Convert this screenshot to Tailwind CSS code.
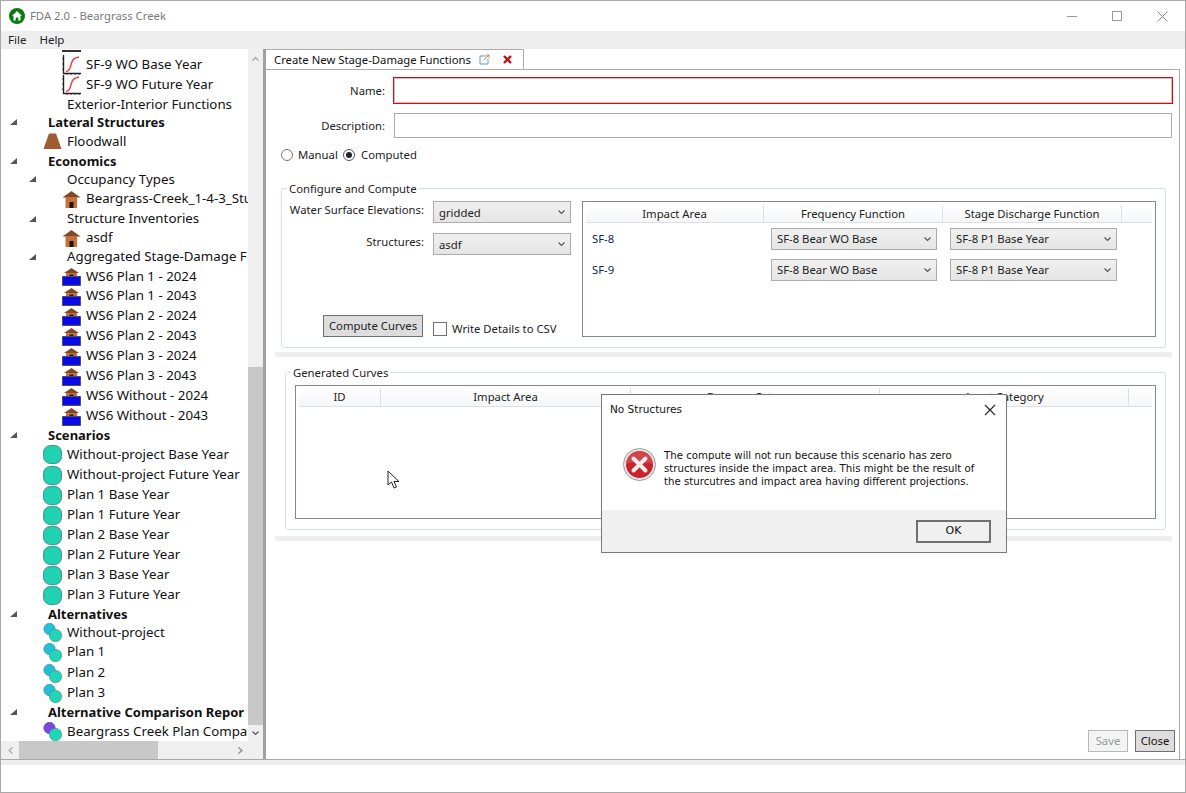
<!DOCTYPE html>
<html lang="en">
<head>
<meta charset="UTF-8">
<title>FDA 2.0 - Beargrass Creek</title>
<script src="https://cdn.jsdelivr.net/npm/@tailwindcss/browser@4"></script>
</head>
<body class="bg-white text-[#111] font-['Noto_Sans',sans-serif] overflow-hidden">
<svg class="hidden">
  <symbol id="curve" viewBox="0 0 19 20">
    <path d="M1.500 0V18.500H19" fill="none" stroke="#222" stroke-width="1.400"/>
    <path d="M0 4h1M0 9h1M0 14h1M5 19v1M9 19v1M13 19v1M17 19v1" stroke="#444"/>
    <path d="M4 16.500C8 15.500 8 13 9.500 8C11 3.500 13 3 17 2" fill="none" stroke="#ee3340" stroke-width="1.400"/>
  </symbol>
  <symbol id="house" viewBox="0 0 19 19">
    <path d="M9.500 1L18.500 7.500H0.500Z" fill="#7b4a2c"/>
    <path d="M3.500 7H15V18H3.500Z" fill="#c9703a"/>
    <path d="M7.500 12H11.500V18H7.500Z" fill="#1c1410"/>
  </symbol>
  <symbol id="flood" viewBox="0 0 19 19">
    <path d="M9.500 1L17 6H2Z" fill="#7b4a2c"/>
    <path d="M4 6H15V10H4Z" fill="#c9703a"/>
    <path d="M7.500 7.500H11.500V10H7.500Z" fill="#2a1a10"/>
    <path d="M0.500 9.500H18.500V18.500H0.500Z" fill="#0a0ae8" stroke="#44506a"/>
  </symbol>
  <symbol id="scen" viewBox="0 0 19 19">
    <rect x="0.500" y="0.500" width="18" height="18" rx="7" fill="#1fd2b2" stroke="#4a8c88"/>
  </symbol>
  <symbol id="alt" viewBox="0 0 19 19">
    <circle cx="6.500" cy="6" r="5.700" fill="#20c0d8" stroke="#4d8a9c" stroke-width="0.700"/>
    <rect x="6.500" y="6.500" width="12" height="12" rx="5.500" fill="#20d6b6" stroke="#4b948c" stroke-width="0.700"/>
  </symbol>
  <symbol id="comp" viewBox="0 0 19 19">
    <circle cx="6.500" cy="6" r="5.700" fill="#7f45e0" stroke="#55508c" stroke-width="0.700"/>
    <rect x="6.500" y="6.500" width="12" height="12" rx="5.500" fill="#20d6b6" stroke="#4b948c" stroke-width="0.700"/>
  </symbol>
  <symbol id="arrow" viewBox="0 0 7 7"><path d="M7 0V6H0Z" fill="#555"/></symbol>
  <symbol id="chev" viewBox="0 0 7 5"><path d="M0.500 0.500L3.500 3.500L6.500 0.500" fill="none" stroke="#555" stroke-width="1.200"/></symbol>
</svg>

<div class="relative w-[1186px] h-[793px] border border-[#a8a8a8] flex flex-col overflow-hidden">
  <!-- title bar -->
  <div class="h-[30px] flex items-center shrink-0">
    <svg class="w-4 h-4 ml-[8px]" viewBox="0 0 16 16"><circle cx="8" cy="8" r="8" fill="#0a7a14"/><path d="M8 3L13 8H11.500V12.500H9.300V9.500H6.700V12.500H4.500V8H3Z" fill="#fff"/></svg>
    <span class="ml-[5px] mt-px text-[11.3px] text-[#7a7a7a]">FDA 2.0 - Beargrass Creek</span>
    <div class="ml-auto flex items-center mr-[17px] gap-[35px]">
      <div class="w-[10px] h-px bg-[#999]"></div>
      <div class="w-[10px] h-[10px] border border-[#999]"></div>
      <svg class="w-[11px] h-[11px]" viewBox="0 0 11 11"><path d="M0.500 0.500L10.500 10.500M10.500 0.500L0.500 10.500" stroke="#888" stroke-width="1"/></svg>
    </div>
  </div>
  <!-- menu -->
  <div class="h-[18px] bg-[#eeeeee] flex items-center pl-[7px] gap-[13px] text-[11.5px] text-[#222] shrink-0">
    <span>File</span><span>Help</span>
  </div>

  <div class="flex h-[710px] shrink-0">
    <!-- tree -->
    <div class="w-[262px] flex flex-col shrink-0">
      <div class="flex h-[692px]">
        <div class="w-[247px] h-[692px] overflow-hidden text-[13.3px] leading-none whitespace-nowrap">
          <div class="h-[6px] pt-px pl-[61px]"><div class="w-[19px] h-[2px] bg-[#333]"></div></div>
          <div class="flex items-center h-5 pl-[61px]"><svg class="w-[19px] h-5 shrink-0"><use href="#curve"/></svg><span class="ml-[5px]">SF-9 WO Base Year</span></div>
          <div class="flex items-center h-5 pl-[61px]"><svg class="w-[19px] h-5 shrink-0"><use href="#curve"/></svg><span class="ml-[5px]">SF-9 WO Future Year</span></div>
          <div class="flex items-center h-[19px] pl-[66px]">Exterior-Interior Functions</div>
          <div class="flex items-center h-[17px] pl-[9px]"><svg class="w-[7px] h-[7px] shrink-0"><use href="#arrow"/></svg><b class="ml-[31px] text-[13px]">Lateral Structures</b></div>
          <div class="flex items-center h-[21px] pl-[42px]"><svg class="w-[19px] h-[19px] shrink-0" viewBox="0 0 19 19"><path d="M6 1.500H13L18.500 17H0.500Z" fill="#a05c30"/></svg><span class="ml-[5px]">Floodwall</span></div>
          <div class="flex items-center h-[18px] pl-[9px]"><svg class="w-[7px] h-[7px] shrink-0"><use href="#arrow"/></svg><b class="ml-[31px] text-[13px]">Economics</b></div>
          <div class="flex items-center h-[19px] pl-[28px]"><svg class="w-[7px] h-[7px] shrink-0"><use href="#arrow"/></svg><span class="ml-[31px]">Occupancy Types</span></div>
          <div class="flex items-center h-5 pl-[61px]"><svg class="w-[19px] h-[19px] shrink-0"><use href="#house"/></svg><span class="ml-[5px]">Beargrass-Creek_1-4-3_Stu</span></div>
          <div class="flex items-center h-5 pl-[28px]"><svg class="w-[7px] h-[7px] shrink-0"><use href="#arrow"/></svg><span class="ml-[31px]">Structure Inventories</span></div>
          <div class="flex items-center h-[18px] pl-[61px]"><svg class="w-[19px] h-[19px] shrink-0"><use href="#house"/></svg><span class="ml-[5px]">asdf</span></div>
          <div class="flex items-center h-5 pl-[28px]"><svg class="w-[7px] h-[7px] shrink-0"><use href="#arrow"/></svg><span class="ml-[31px]">Aggregated Stage-Damage F</span></div>
          <div class="flex items-center h-[19px] pl-[61px]"><svg class="w-[19px] h-[19px] shrink-0"><use href="#flood"/></svg><span class="ml-[5px]">WS6 Plan 1 - 2024</span></div>
          <div class="flex items-center h-5 pl-[61px]"><svg class="w-[19px] h-[19px] shrink-0"><use href="#flood"/></svg><span class="ml-[5px]">WS6 Plan 1 - 2043</span></div>
          <div class="flex items-center h-5 pl-[61px]"><svg class="w-[19px] h-[19px] shrink-0"><use href="#flood"/></svg><span class="ml-[5px]">WS6 Plan 2 - 2024</span></div>
          <div class="flex items-center h-5 pl-[61px]"><svg class="w-[19px] h-[19px] shrink-0"><use href="#flood"/></svg><span class="ml-[5px]">WS6 Plan 2 - 2043</span></div>
          <div class="flex items-center h-5 pl-[61px]"><svg class="w-[19px] h-[19px] shrink-0"><use href="#flood"/></svg><span class="ml-[5px]">WS6 Plan 3 - 2024</span></div>
          <div class="flex items-center h-5 pl-[61px]"><svg class="w-[19px] h-[19px] shrink-0"><use href="#flood"/></svg><span class="ml-[5px]">WS6 Plan 3 - 2043</span></div>
          <div class="flex items-center h-5 pl-[61px]"><svg class="w-[19px] h-[19px] shrink-0"><use href="#flood"/></svg><span class="ml-[5px]">WS6 Without - 2024</span></div>
          <div class="flex items-center h-5 pl-[61px]"><svg class="w-[19px] h-[19px] shrink-0"><use href="#flood"/></svg><span class="ml-[5px]">WS6 Without - 2043</span></div>
          <div class="flex items-center h-[18px] pl-[9px]"><svg class="w-[7px] h-[7px] shrink-0"><use href="#arrow"/></svg><b class="ml-[31px] text-[13px]">Scenarios</b></div>
          <div class="flex items-center h-[21px] pl-[42px]"><svg class="w-[19px] h-[19px] shrink-0"><use href="#scen"/></svg><span class="ml-[5px]">Without-project Base Year</span></div>
          <div class="flex items-center h-5 pl-[42px]"><svg class="w-[19px] h-[19px] shrink-0"><use href="#scen"/></svg><span class="ml-[5px]">Without-project Future Year</span></div>
          <div class="flex items-center h-5 pl-[42px]"><svg class="w-[19px] h-[19px] shrink-0"><use href="#scen"/></svg><span class="ml-[5px]">Plan 1 Base Year</span></div>
          <div class="flex items-center h-5 pl-[42px]"><svg class="w-[19px] h-[19px] shrink-0"><use href="#scen"/></svg><span class="ml-[5px]">Plan 1 Future Year</span></div>
          <div class="flex items-center h-5 pl-[42px]"><svg class="w-[19px] h-[19px] shrink-0"><use href="#scen"/></svg><span class="ml-[5px]">Plan 2 Base Year</span></div>
          <div class="flex items-center h-5 pl-[42px]"><svg class="w-[19px] h-[19px] shrink-0"><use href="#scen"/></svg><span class="ml-[5px]">Plan 2 Future Year</span></div>
          <div class="flex items-center h-5 pl-[42px]"><svg class="w-[19px] h-[19px] shrink-0"><use href="#scen"/></svg><span class="ml-[5px]">Plan 3 Base Year</span></div>
          <div class="flex items-center h-5 pl-[42px]"><svg class="w-[19px] h-[19px] shrink-0"><use href="#scen"/></svg><span class="ml-[5px]">Plan 3 Future Year</span></div>
          <div class="flex items-center h-[19px] pl-[9px]"><svg class="w-[7px] h-[7px] shrink-0"><use href="#arrow"/></svg><b class="ml-[31px] text-[13px]">Alternatives</b></div>
          <div class="flex items-center h-[17px] pl-[42px]"><svg class="w-[19px] h-[19px] shrink-0"><use href="#alt"/></svg><span class="ml-[5px]">Without-project</span></div>
          <div class="flex items-center h-[22px] pl-[42px]"><svg class="w-[19px] h-[19px] shrink-0"><use href="#alt"/></svg><span class="ml-[5px]">Plan 1</span></div>
          <div class="flex items-center h-5 pl-[42px]"><svg class="w-[19px] h-[19px] shrink-0"><use href="#alt"/></svg><span class="ml-[5px]">Plan 2</span></div>
          <div class="flex items-center h-5 pl-[42px]"><svg class="w-[19px] h-[19px] shrink-0"><use href="#alt"/></svg><span class="ml-[5px]">Plan 3</span></div>
          <div class="flex items-center h-[18px] pl-[9px]"><svg class="w-[7px] h-[7px] shrink-0"><use href="#arrow"/></svg><b class="ml-[31px] text-[13px]">Alternative Comparison Repor</b></div>
          <div class="flex items-center h-[21px] pl-[42px]"><svg class="w-[19px] h-[19px] shrink-0"><use href="#comp"/></svg><span class="ml-[5px]">Beargrass Creek Plan Compar</span></div>
        </div>
        <!-- vertical scrollbar -->
        <div class="w-[15px] h-[692px] bg-[#efefef] flex flex-col shrink-0">
          <svg class="w-[7px] h-[5px] mx-auto mt-[7px] rotate-180 opacity-50"><use href="#chev"/></svg>
          <div class="mt-[306px] h-[358px] w-[15px] bg-[#c8c8c8]"></div>
          <svg class="w-[7px] h-[5px] mx-auto mt-[6px]"><use href="#chev"/></svg>
        </div>
      </div>
      <!-- horizontal scrollbar -->
      <div class="h-[18px] bg-[#efefef] flex items-center w-[262px]">
        <svg class="w-[5px] h-[7px] ml-[7px] shrink-0" viewBox="0 0 5 7"><path d="M4.500 0.500L1 3.500L4.500 6.500" fill="none" stroke="#aaa" stroke-width="1.200"/></svg>
        <div class="ml-[6px] w-[139px] h-full bg-[#c8c8c8]"></div>
        <svg class="w-[5px] h-[7px] ml-[80px] shrink-0" viewBox="0 0 5 7"><path d="M0.500 0.500L4 3.500L0.500 6.500" fill="none" stroke="#888" stroke-width="1.200"/></svg>
      </div>
    </div>
    <!-- splitter -->
    <div class="w-[3px] bg-[#a0a0a0] shrink-0"></div>

    <!-- right pane -->
    <div class="w-[914px] flex flex-col text-[11.3px] text-[#222] leading-none shrink-0">
      <!-- tab strip -->
      <div class="flex h-[21px] shrink-0">
        <div class="w-[258px] h-[21px] border border-[#acacac] border-l-0 flex items-center pl-[8px] text-[#111] bg-white">
          <span>Create New Stage-Damage Functions</span>
          <svg class="w-[11px] h-[11px] ml-[8px]" viewBox="0 0 11 11"><path d="M7 2H1V10H9V5" fill="none" stroke="#5b9bc8"/><path d="M5 6L10 1M7 1H10V4" fill="none" stroke="#e08050"/></svg>
          <svg class="w-[9px] h-[9px] ml-[13px]" viewBox="0 0 9 9"><path d="M1 1L8 8M8 1L1 8" stroke="#c8101c" stroke-width="2.400"/></svg>
        </div>
        <div class="w-[656px] border-b border-[#acacac]"></div>
      </div>
      <div class="flex-1 border-r border-[#a8a8a8] relative pt-[7px]">
        <!-- name / description -->
        <div class="flex items-center h-[27px]">
          <div class="w-[119px] text-right">Name:</div>
          <div class="ml-[8px] w-[780px] h-[27px] border border-[#e8000a] shadow-[inset_0_0_0_1px_#c4c4c4]"></div>
        </div>
        <div class="flex items-center h-[25px] mt-[9px]">
          <div class="w-[119px] text-right">Description:</div>
          <div class="ml-[9px] w-[778px] h-[25px] border border-[#acacac]"></div>
        </div>
        <div class="flex items-center mt-[10px] pl-[15px] h-[14px]">
          <div class="w-[12px] h-[12px] rounded-full border border-[#777] shrink-0"></div>
          <span class="ml-[5px] w-[40px]">Manual</span>
          <div class="ml-[5px] w-[12px] h-[12px] rounded-full border border-[#555] flex items-center justify-center shrink-0"><div class="w-[6px] h-[6px] rounded-full bg-[#222]"></div></div>
          <span class="ml-[6px]">Computed</span>
        </div>

        <!-- configure and compute -->
        <div class="relative ml-[15px] mt-[26px] w-[885px] h-[160px] border border-[#d5dfe5] rounded-[3px]">
          <span class="absolute left-[5px] -top-[6px] bg-white px-[2px]">Configure and Compute</span>
          <div class="flex pt-[12px] pl-[9px]">
            <div class="w-[133px] shrink-0">
              <div class="h-[22px] flex items-start justify-end whitespace-nowrap pt-[3px]">Water Surface Elevations:</div>
              <div class="h-[22px] mt-[10px] flex items-start justify-end pt-[3px]">Structures:</div>
              <button class="mt-[60px] ml-[32px] w-[100px] h-[22px] bg-[#dddddd] border border-[#707070] block">Compute Curves</button>
            </div>
            <div class="ml-[9px] w-[138px] shrink-0">
              <div class="h-[22px] w-[138px] border border-[#acacac] bg-linear-to-b from-[#f0f0f0] to-[#e5e5e5] flex items-center justify-between px-[5px]"><span class="pt-px">gridded</span><svg class="w-[7px] h-[5px]"><use href="#chev"/></svg></div>
              <div class="h-[22px] w-[138px] mt-[10px] border border-[#acacac] bg-linear-to-b from-[#f0f0f0] to-[#e5e5e5] flex items-center justify-between px-[5px]"><span class="pt-px">asdf</span><svg class="w-[7px] h-[5px]"><use href="#chev"/></svg></div>
              <div class="flex items-center mt-[67px] h-[14px] whitespace-nowrap">
                <div class="w-[14px] h-[14px] border border-[#707070] shrink-0"></div><span class="ml-[5px]">Write Details to CSV</span>
              </div>
            </div>
            <!-- impact area grid -->
            <div class="ml-[11px] w-[574px] h-[136px] border border-[#828790] p-[3px] pb-0">
              <div class="flex h-[18px] border-b border-[#dde0e3] bg-linear-to-b from-white to-[#f5f6f7] text-center items-center">
                <div class="w-[178px] border-r border-[#dde0e3] h-full flex items-center justify-center">Impact Area</div>
                <div class="w-[179px] border-r border-[#dde0e3] h-full flex items-center justify-center">Frequency Function</div>
                <div class="w-[179px] border-r border-[#dde0e3] h-full flex items-center justify-center">Stage Discharge Function</div>
              </div>
              <div class="flex items-center h-[22px] mt-[5px] text-[#10284a]">
                <div class="w-[185px] pl-[6px]">SF-8</div>
                <div class="w-[166px] h-[22px] border border-[#acacac] bg-linear-to-b from-[#f0f0f0] to-[#e5e5e5] flex items-center justify-between px-[5px] text-[#222]"><span>SF-8 Bear WO Base</span><svg class="w-[7px] h-[5px]"><use href="#chev"/></svg></div>
                <div class="ml-[13px] w-[167px] h-[22px] border border-[#acacac] bg-linear-to-b from-[#f0f0f0] to-[#e5e5e5] flex items-center justify-between px-[5px] text-[#222]"><span>SF-8 P1 Base Year</span><svg class="w-[7px] h-[5px]"><use href="#chev"/></svg></div>
              </div>
              <div class="flex items-center h-[22px] mt-[9px] text-[#10284a]">
                <div class="w-[185px] pl-[6px]">SF-9</div>
                <div class="w-[166px] h-[22px] border border-[#acacac] bg-linear-to-b from-[#f0f0f0] to-[#e5e5e5] flex items-center justify-between px-[5px] text-[#222]"><span>SF-8 Bear WO Base</span><svg class="w-[7px] h-[5px]"><use href="#chev"/></svg></div>
                <div class="ml-[13px] w-[167px] h-[22px] border border-[#acacac] bg-linear-to-b from-[#f0f0f0] to-[#e5e5e5] flex items-center justify-between px-[5px] text-[#222]"><span>SF-8 P1 Base Year</span><svg class="w-[7px] h-[5px]"><use href="#chev"/></svg></div>
              </div>
            </div>
          </div>
        </div>
        <div class="ml-[9px] mt-[4px] w-[897px] h-[5px] bg-[#eeeeee]"></div>

        <!-- generated curves -->
        <div class="relative ml-[19px] mt-[15px] w-[881px] h-[158px] border border-[#d5dfe5] rounded-[3px]">
          <span class="absolute left-[5px] -top-[6px] bg-white px-[2px]">Generated Curves</span>
          <div class="ml-[9px] mt-[12px] w-[861px] h-[134px] border border-[#828790] px-[3px] pt-[2px]">
            <div class="flex h-[19px] border-b border-[#dde0e3] bg-linear-to-b from-white to-[#f5f6f7]">
              <div class="w-[82px] border-r border-[#dde0e3] flex items-center justify-center">ID</div>
              <div class="w-[250px] border-r border-[#dde0e3] flex items-center justify-center">Impact Area</div>
              <div class="w-[249px] border-r border-[#dde0e3] flex items-center justify-center">Damage Category</div>
              <div class="w-[249px] border-r border-[#dde0e3] flex items-center justify-center">Asset Category</div>
            </div>
          </div>
        </div>
        <div class="ml-[9px] mt-[6px] w-[897px] h-[5px] bg-[#eeeeee]"></div>

        <!-- save / close -->
        <div class="absolute right-[4px] bottom-[7px] flex gap-[7px]">
          <button class="w-[40px] h-[22px] border border-[#b4b9bc] bg-[#f4f4f4] text-[#999]">Save</button>
          <button class="w-[40px] h-[22px] border border-[#707070] bg-[#dddddd] text-[#111]">Close</button>
        </div>
      </div>
    </div>
  </div>
  <!-- bottom strip -->
  <div class="h-[6px] bg-[#eeeeee] border-t border-[#a8a8a8] shrink-0"></div>

  <!-- mouse pointer -->
  <svg class="absolute left-[386px] top-[469px] w-[13px] h-[20px]" viewBox="0 0 13 20"><path d="M1 1V15L4.500 12L7 18L9.500 17L7 11.500H12Z" fill="#fff" stroke="#222" stroke-width="1"/></svg>

  <!-- message box -->
  <div class="absolute left-[600px] top-[393px] w-[406px] h-[159px] bg-white border border-[#777] flex flex-col font-['DejaVu_Sans',sans-serif] text-[#111]">
    <div class="flex items-center justify-between h-[30px] pl-[8px] pr-[10px] shrink-0">
      <span class="text-[10.5px]">No Structures</span>
      <svg class="w-[12px] h-[12px]" viewBox="0 0 12 12"><path d="M1 1L11 11M11 1L1 11" stroke="#222" stroke-width="1.100"/></svg>
    </div>
    <div class="flex flex-1 pl-[21px] pt-[23px]">
      <svg class="w-[33px] h-[33px] shrink-0" viewBox="0 0 33 33">
        <circle cx="16.500" cy="16.500" r="16" fill="#e8e8e8" stroke="#999"/>
        <circle cx="16.500" cy="16.500" r="13.500" fill="#c8222c"/>
        <path d="M3 16.500a13.500 13.500 0 0 1 27 0c-6-3-21-3-27 0Z" fill="#e0626a" opacity="0.500"/>
        <path d="M10.500 10.500L22.500 22.500M22.500 10.500L10.500 22.500" stroke="#eee" stroke-width="4" stroke-linecap="round"/>
      </svg>
      <p class="ml-[8px] text-[10.2px] leading-[13px] w-[320px] mt-[1px]">The compute will not run because this scenario has zero structures inside the impact area. This might be the result of the sturcutres and impact area having different projections.</p>
    </div>
    <div class="h-[42px] bg-[#f0f0f0] flex items-center justify-end pr-[15px] shrink-0">
      <button class="w-[75px] h-[23px] border-2 border-[#707070] bg-[#f0f0f0] text-[11px]">OK</button>
    </div>
  </div>
</div>
</body>
</html>
